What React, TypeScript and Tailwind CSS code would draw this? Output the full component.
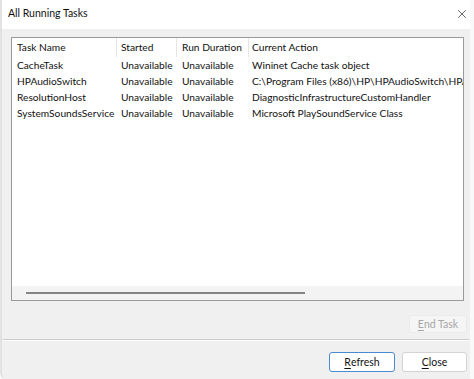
import { X } from 'lucide-react';

// Rows shown in the task list
const tasks = [
  { name: 'CacheTask', started: 'Unavailable', duration: 'Unavailable', action: 'Wininet Cache task object' },
  { name: 'HPAudioSwitch', started: 'Unavailable', duration: 'Unavailable', action: 'C:\\Program Files (x86)\\HP\\HPAudioSwitch\\HPAudioSwitch.exe' },
  { name: 'ResolutionHost', started: 'Unavailable', duration: 'Unavailable', action: 'DiagnosticInfrastructureCustomHandler' },
  { name: 'SystemSoundsService', started: 'Unavailable', duration: 'Unavailable', action: 'Microsoft PlaySoundService Class' },
];

function DialogButton({ label, accel, primary, disabled, className }: {
  label: string;
  accel: number;
  primary?: boolean;
  disabled?: boolean;
  className?: string;
}) {
  const before = label.slice(0, accel);
  const key = label.charAt(accel);
  const after = label.slice(accel + 1);
  return (
    <button
      disabled={disabled}
      className={
        'flex items-center justify-center whitespace-nowrap rounded-[3px] border text-[10.5px] leading-none ' +
        (disabled
          ? 'border-[#ebebeb] bg-[#f5f5f5] text-[#a6a6a6] '
          : primary
            ? 'border-[#4a8ad0] bg-white text-[#111] '
            : 'border-[#d3d3d3] bg-white text-[#111] ') +
        (className ?? '')
      }
    >
      {before}
      <span className="underline underline-offset-2">{key}</span>
      {after}
    </button>
  );
}

export default function App() {
  return (
    <div className="h-[379px] w-[474px] overflow-hidden bg-[#f9f9f9] font-['Lato',sans-serif] text-[#111]">
      <div className="flex h-full w-[470px] flex-col rounded-bl-[6px] border-l-[2px] border-[#e2e2e2] bg-[#f0f0f0]">
        {/* Title bar */}
        <div className="flex h-[29px] items-center justify-between bg-white pb-[2px] pl-[6px] pr-[1px]">
          <span className="text-[10.5px]">All Running Tasks</span>
          <X className="h-[14px] w-[14px] text-[#222]" strokeWidth={1.2} />
        </div>

        {/* Task list */}
        <div className="pl-[9px] pt-[8px]">
          <div className="flex h-[264px] w-[453px] flex-col overflow-hidden border border-[#9a9a9a] bg-white text-[10.2px]">
            <div className="flex h-[19px] items-center whitespace-nowrap">
              <div className="w-[104px] shrink-0 pl-[5px]">Task Name</div>
              <div className="h-full w-px bg-[#e5e5e5]" />
              <div className="w-[59px] shrink-0 pl-[4px]">Started</div>
              <div className="h-full w-px bg-[#e5e5e5]" />
              <div className="w-[71px] shrink-0 pl-[5px]">Run Duration</div>
              <div className="h-full w-px bg-[#e5e5e5]" />
              <div className="pl-[3px]">Current Action</div>
            </div>
            {tasks.map(task => (
              <div key={task.name} className="flex h-[16px] items-center whitespace-nowrap pt-[1px]">
                <div className="w-[105px] shrink-0 pl-[5px]">{task.name}</div>
                <div className="w-[60px] shrink-0 pl-[4px]">{task.started}</div>
                <div className="w-[72px] shrink-0 pl-[5px]">{task.duration}</div>
                <div className="pl-[3px]">{task.action}</div>
              </div>
            ))}
            <div className="flex-1" />
            <div className="flex h-[14px] shrink-0 items-center bg-[#f3f3f3]">
              <div className="ml-[14px] h-[2px] w-[279px] bg-[#858585]" />
            </div>
          </div>
        </div>

        <div className="mt-[14px] flex justify-end pr-[3px]">
          <DialogButton label="End Task" accel={0} disabled className="h-[18px] w-[58px]" />
        </div>

        <div className="mx-[1px] mt-[6px] h-px bg-[#cbcbcb]" />
        <div className="mx-[1px] h-px bg-white" />

        <div className="mt-[11px] flex justify-end gap-[7px] pr-[3px]">
          <DialogButton label="Refresh" accel={0} primary className="h-[20px] w-[66px]" />
          <DialogButton label="Close" accel={0} className="h-[20px] w-[65px]" />
        </div>
      </div>
    </div>
  );
}
